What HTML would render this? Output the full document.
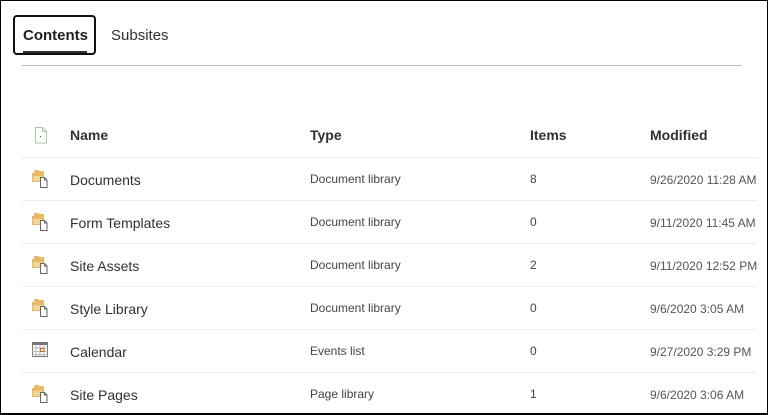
<!DOCTYPE html>
<html><head><style>
html,body{margin:0;padding:0}
body{width:768px;height:415px;position:relative;overflow:hidden;background:#fff;font-family:"Liberation Sans",sans-serif;color:#323130}
.frame{position:absolute;left:0;top:0;width:766px;height:412px;border:1px solid #000;border-right-width:2px;border-bottom-width:2px}
.tab{position:absolute;left:13px;top:15px;width:79px;height:36px;border:2px solid #111;border-radius:4px}
.t1{position:absolute;left:23px;top:27px;font-size:15px;font-weight:bold;color:#201f1e}
.ul{position:absolute;left:23px;top:51px;width:64px;height:2px;background:#323130}
.t2{position:absolute;left:111px;top:27px;font-size:15px;color:#323130}
.hr{position:absolute;left:22px;top:65px;width:720px;height:1px;background:#bbb}
.sep{position:absolute;left:22px;width:735px;height:1px;background:#edebe9}
.c{position:absolute;white-space:nowrap}
.n{left:70px;font-size:14px}
.ty{left:310px;font-size:12px;color:#444}
.it{left:530px;font-size:12px;color:#444}
.m{left:650px;font-size:12px;color:#555}
.h{font-size:14px;font-weight:bold;color:#323130}
.ic{position:absolute;left:31px}
</style></head><body>
<div class="frame"></div>
<div class="tab"></div><div class="t1">Contents</div><div class="ul"></div>
<div class="t2">Subsites</div>
<div class="hr"></div>

<svg class="ic" style="left:34px;top:127px" width="14" height="17"><path d="M1.5 .5h7l4 4v11.5h-11z" fill="#fff" stroke="#a9c9a0"/><path d="M8.5 .5v4h4" fill="none" stroke="#a9c9a0"/><rect x="6" y="9" width="1" height="1" fill="#555"/></svg>
<div class="c h" style="left:70px;top:127px">Name</div>
<div class="c h" style="left:310px;top:127px">Type</div>
<div class="c h" style="left:530px;top:127px">Items</div>
<div class="c h" style="left:650px;top:127px">Modified</div>

<div class="sep" style="top:157px"></div>
<div class="sep" style="top:200px"></div>
<div class="sep" style="top:243px"></div>
<div class="sep" style="top:286px"></div>
<div class="sep" style="top:329px"></div>
<div class="sep" style="top:372px"></div>

<svg width="0" height="0" style="position:absolute"><defs><g id="f"><path d="M3 0h5v1h5v8h-10z" fill="#e8b96a"/><path d="M1 3h4l1 1h6v8h-11z" fill="#e8b96a"/><path d="M2 6h9v5h-9z" fill="#f3d49a"/><path d="M9.5 7.5h4l2.5 2.5v7.5h-6.5z" fill="#fff" stroke="#666"/><path d="M13.5 7.5v2.5h2.5" fill="none" stroke="#666"/></g></defs></svg>

<svg class="ic" style="top:170px" width="18" height="19"><use href="#f"/></svg>
<div class="c n" style="top:172px">Documents</div><div class="c ty" style="top:172px">Document library</div><div class="c it" style="top:172px">8</div><div class="c m" style="top:173px">9/26/2020 11:28 AM</div>

<svg class="ic" style="top:213px" width="18" height="19"><use href="#f"/></svg>
<div class="c n" style="top:215px">Form Templates</div><div class="c ty" style="top:215px">Document library</div><div class="c it" style="top:215px">0</div><div class="c m" style="top:216px">9/11/2020 11:45 AM</div>

<svg class="ic" style="top:256px" width="18" height="19"><use href="#f"/></svg>
<div class="c n" style="top:258px">Site Assets</div><div class="c ty" style="top:258px">Document library</div><div class="c it" style="top:258px">2</div><div class="c m" style="top:259px">9/11/2020 12:52 PM</div>

<svg class="ic" style="top:299px" width="18" height="19"><use href="#f"/></svg>
<div class="c n" style="top:301px">Style Library</div><div class="c ty" style="top:301px">Document library</div><div class="c it" style="top:301px">0</div><div class="c m" style="top:302px">9/6/2020 3:05 AM</div>

<svg class="ic" style="top:341px" width="18" height="18"><rect x="1.5" y="1.5" width="15" height="14" fill="#fff" stroke="#777"/><rect x="1" y="1" width="16" height="3" fill="#777"/><path d="M1 7h16M1 10.5h16M1 13.5h16M5 4v11M9 4v11M13 4v11" stroke="#aaa" stroke-width=".8"/><rect x="9.5" y="7.5" width="3.5" height="3" fill="none" stroke="#d06020"/></svg>
<div class="c n" style="top:344px">Calendar</div><div class="c ty" style="top:344px">Events list</div><div class="c it" style="top:344px">0</div><div class="c m" style="top:345px">9/27/2020 3:29 PM</div>

<svg class="ic" style="top:385px" width="18" height="19"><use href="#f"/></svg>
<div class="c n" style="top:387px">Site Pages</div><div class="c ty" style="top:387px">Page library</div><div class="c it" style="top:387px">1</div><div class="c m" style="top:388px">9/6/2020 3:06 AM</div>
</body></html>
